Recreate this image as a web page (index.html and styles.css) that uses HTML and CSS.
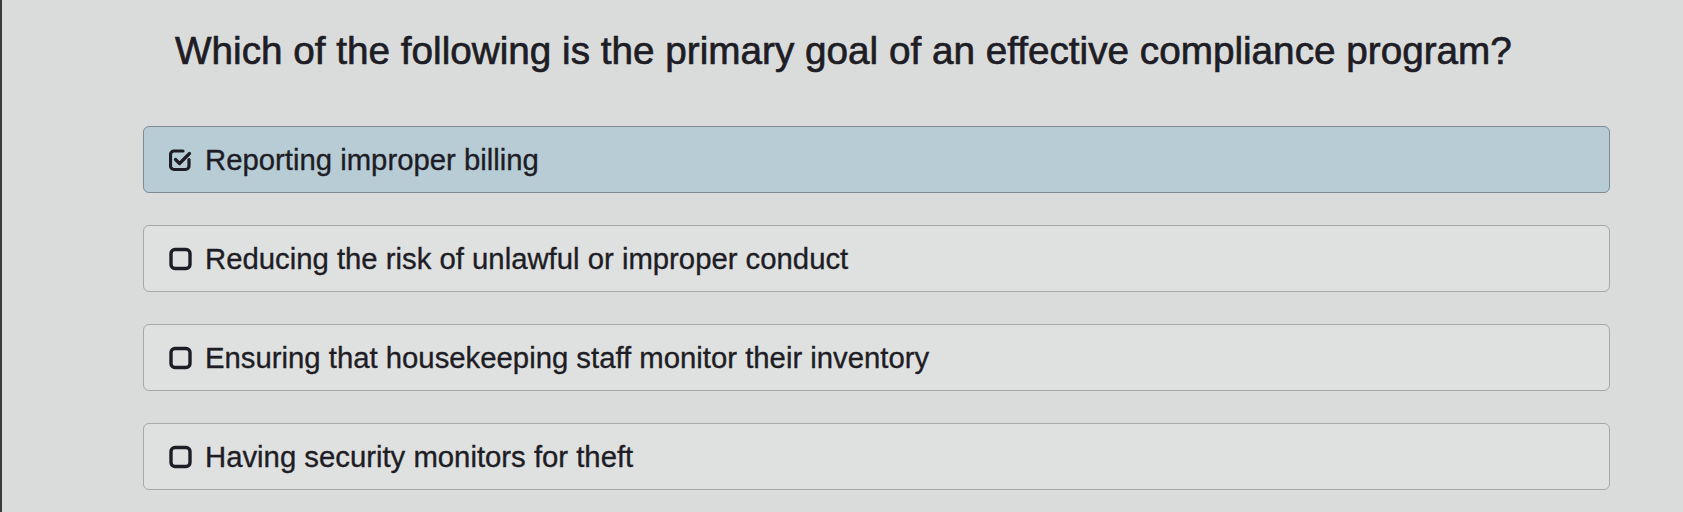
FILE: index.html
```html
<!DOCTYPE html>
<html lang="en">
<head>
<meta charset="utf-8">
<title>Compliance question</title>
<link rel="stylesheet" href="styles.css">
</head>
<body>
<main class="page">
  <h1 class="question">Which of the following is the primary goal of an effective compliance program?</h1>
  <ul class="options">
    <li class="option selected">
      <svg class="box-icon" viewBox="0 0 24 24" aria-hidden="true">
        <path d="M20 11.5v6.5a3.5 3.5 0 0 1-3.5 3.5h-11.5a3.5 3.5 0 0 1-3.5-3.5v-11.5a3.5 3.5 0 0 1 3.5-3.5h9" fill="none" stroke="#1e1d25" stroke-width="3.2" stroke-linecap="round" stroke-linejoin="round"/>
        <path d="M6.5 11.5l4 4 10-10" fill="none" stroke="#1e1d25" stroke-width="3.2" stroke-linecap="round" stroke-linejoin="round"/>
      </svg>
      <span class="label">Reporting improper billing</span>
    </li>
    <li class="option">
      <svg class="box-icon" viewBox="0 0 24 24" aria-hidden="true">
        <rect x="2" y="2.5" width="19" height="19" rx="4" fill="none" stroke="#1e1d25" stroke-width="3.4"/>
      </svg>
      <span class="label">Reducing the risk of unlawful or improper conduct</span>
    </li>
    <li class="option">
      <svg class="box-icon" viewBox="0 0 24 24" aria-hidden="true">
        <rect x="2" y="2.5" width="19" height="19" rx="4" fill="none" stroke="#1e1d25" stroke-width="3.4"/>
      </svg>
      <span class="label">Ensuring that housekeeping staff monitor their inventory</span>
    </li>
    <li class="option">
      <svg class="box-icon" viewBox="0 0 24 24" aria-hidden="true">
        <rect x="2" y="2.5" width="19" height="19" rx="4" fill="none" stroke="#1e1d25" stroke-width="3.4"/>
      </svg>
      <span class="label">Having security monitors for theft</span>
    </li>
  </ul>
</main>
</body>
</html>
```

FILE: styles.css
```css
html, body {
  margin: 0;
  padding: 0;
}

body {
  background: #dadcdb;
  font-family: "Liberation Sans", Arial, Helvetica, sans-serif;
  color: #1e1d25;
  width: 1683px;
  height: 512px;
  overflow: hidden;
  border-left: 2px solid #3a3a3a;
  box-sizing: border-box;
}

.page {
  padding: 0 0 0 141px;
  width: 1467px;
}

.question {
  margin: 0;
  padding: 26px 0 0 32px;
  font-size: 38.7px;
  font-weight: normal;
  line-height: 50px;
  letter-spacing: 0;
  -webkit-text-stroke: 0.7px #1e1d25;
}

.options {
  list-style: none;
  margin: 50px 0 0;
  padding: 0;
  display: flex;
  flex-direction: column;
  gap: 32px;
}

.option {
  height: 67px;
  box-sizing: border-box;
  border: 1.5px solid #a4a8a8;
  border-radius: 6px;
  background: #dfe1e0;
  display: flex;
  align-items: center;
  gap: 12px;
  padding-left: 25px;
}

.option.selected {
  background: #b8ccd6;
  border-color: #7d8a90;
}

.box-icon {
  width: 24px;
  height: 24px;
  flex: none;
}

.label {
  font-size: 29.3px;
  line-height: 1;
  -webkit-text-stroke: 0.35px #1e1d25;
}
```
